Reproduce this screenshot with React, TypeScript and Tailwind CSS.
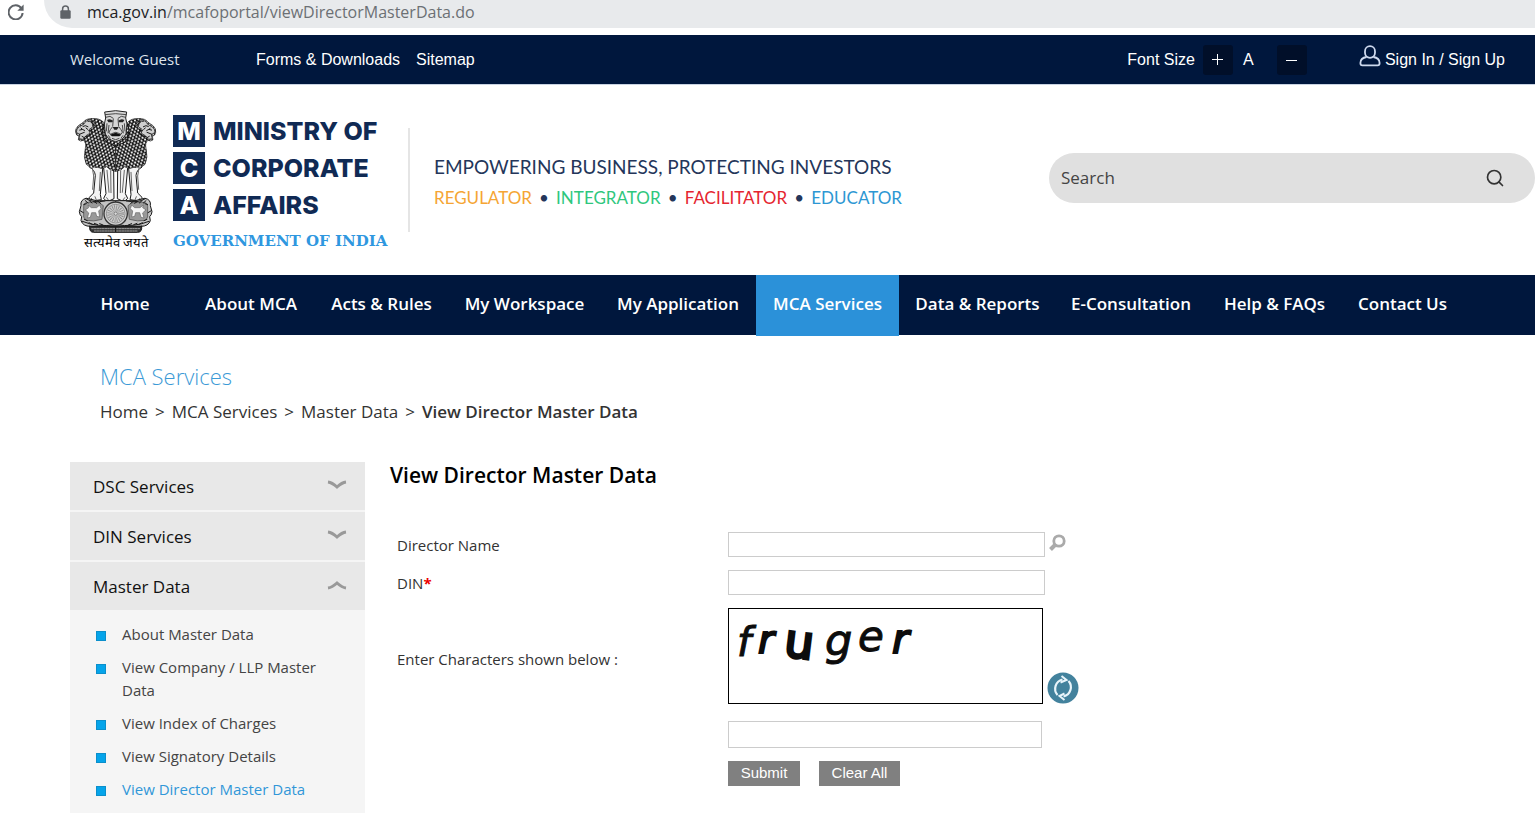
import type { ReactNode } from 'react';
import { Search } from 'lucide-react';

const navItems = [
  'Home',
  'About MCA',
  'Acts & Rules',
  'My Workspace',
  'My Application',
  'MCA Services',
  'Data & Reports',
  'E-Consultation',
  'Help & FAQs',
  'Contact Us',
];

const masterDataLinks = [
  'About Master Data',
  'View Company / LLP Master Data',
  'View Index of Charges',
  'View Signatory Details',
  'View Director Master Data',
];

function BrowserBar() {
  return (
    <div className="flex h-[35px] items-start overflow-hidden bg-white">
      <button type="button" aria-label="Reload" className="ml-2 mt-1 h-4 w-4 text-[#5f6368]">
        <svg viewBox="0 0 16 16" className="h-4 w-4" fill="none">
          <path d="M13.4 4.4A7 7 0 1 0 14.6 9" stroke="currentColor" strokeWidth="2" />
          <path d="M15.6 0.5v6.3H9.3z" fill="currentColor" />
        </svg>
      </button>
      <div className="ml-5 flex h-[28px] flex-1 items-center rounded-bl-full bg-[#e8eaec] pb-1 pl-4 text-base">
        <svg viewBox="0 0 11 14" className="h-[14px] w-[11px]" aria-hidden="true">
          <path d="M2.6 6V3.9a2.9 2.9 0 0 1 5.8 0V6" fill="none" stroke="#5f6368" strokeWidth="1.5" />
          <rect x="0.3" y="5.3" width="10.4" height="8.4" rx="1.2" fill="#5f6368" />
        </svg>
        <span className="ml-4 text-[#6c7074]">
          <span className="text-[#202124]">mca.gov.in</span>/mcafoportal/viewDirectorMasterData.do
        </span>
      </div>
    </div>
  );
}

function TopBar() {
  return (
    <div className="flex h-[50px] items-center border-b border-[#c9d3e2] bg-[#00173d] pl-[70px] pr-[30px] text-white">
      <span className="w-[186px] text-[15px] text-[#dfe4ec]">Welcome Guest</span>
      <nav className="flex gap-4 font-['Liberation_Sans',Arial,sans-serif] text-base">
        <a href="#forms">Forms &amp; Downloads</a>
        <a href="#sitemap">Sitemap</a>
      </nav>
      <div className="ml-auto flex items-center font-['Liberation_Sans',Arial,sans-serif] text-base">
        <span>Font Size</span>
        <FontButton label="Increase font size">
          <path d="M0 5.5h11M5.5 0v11" />
        </FontButton>
        <button type="button" className="w-[28px] pl-[2px] text-left">A</button>
        <FontButton label="Decrease font size">
          <path d="M0 6.5h11" />
        </FontButton>
        <a href="#sign-in" className="ml-[44px] flex items-center gap-1">
          <svg viewBox="0 0 22 22" className="mb-2 h-[22px] w-[22px]" fill="none" stroke="#cdd9ee" strokeWidth="1.8" aria-hidden="true">
            <rect x="6" y="1.2" width="10" height="11.6" rx="5" />
            <path d="M7.6 12C3.6 12.6 1.4 14.8 1.4 18c0 1.8.6 2.4 2 2.4h15.2c1.4 0 2-.6 2-2.4 0-3.2-2.2-5.4-6.2-6" />
          </svg>
          Sign In / Sign Up
        </a>
      </div>
    </div>
  );
}

function FontButton({ label, children }: { label: string; children: ReactNode }) {
  return (
    <button type="button" aria-label={label} className="mx-2 flex h-[30px] w-[30px] items-center justify-center rounded-[3px] bg-[#010f29]">
      <svg viewBox="0 0 11 11" className="h-[11px] w-[11px]" fill="none" stroke="white">{children}</svg>
    </button>
  );
}

function Emblem() {
  return (
    <svg viewBox="42 42 252 372" className="h-[124px] w-[84px]" role="img" aria-label="State Emblem of India">
      <defs>
        <pattern id="mane" width="11" height="16" patternUnits="userSpaceOnUse" patternTransform="rotate(18)">
          <rect width="11" height="16" fill="#fafafa" />
          <path d="M0 0Q1 9 5.5 11Q10 9 11 0M-5.5 8Q-4.5 17 0 19Q4.5 17 5.5 8M5.5 8Q6.5 17 11 19M-5.5 -8Q-4.5 1 0 3Q4.5 1 5.5 -8M5.5 -8Q6.5 1 11 3" fill="none" stroke="#111" strokeWidth="3.4" />
        </pattern>
        <g id="lion-side" stroke="#1a1a1a" strokeWidth="3" strokeLinejoin="round" strokeLinecap="round">
          <path d="M94 68Q78 67 70 79L55 89Q45 98 47 109L50 117L57 121L55 131Q61 138 70 133Q80 141 76 157Q69 184 79 205Q94 220 112 214L126 219L140 212L154 224L167 226V103L134 99L132 80Q119 65 94 68Z" fill="url(#mane)" strokeWidth="2" />
          <path d="M93 70Q76 73 71 85L58 92Q49 98 49 109L60 116L57 128L68 130L78 119L90 112L88 100L98 93Z" fill="#d0d0d0" stroke="#444" />
          <path d="M69 91Q76 86 84 92M59 102Q68 97 74 103M58 115L73 109M84 76Q99 72 107 83M101 87Q112 89 111 99M86 104L97 105L91 118M76 122L88 119M63 96L67 100M78 96L83 100M66 121L73 125M92 78L100 84M113 77L120 90" fill="none" />
          <path d="M89 214Q104 221 106 238L101 291L88 304Q86 314 103 314L124 311L121 296L128 219M131 216L138 293L131 307Q134 316 149 314L162 308L161 226" fill="#f4f4f4" />
          <path d="M97 216L101 240L98 280M121 229L118 284M141 223L147 289M152 224L153 290M94 307L98 312M105 302L109 312M140 305L145 312" fill="none" stroke="#666" />
          <path d="M78 307Q60 311 63 329L58 347Q59 357 65 362L63 374Q69 391 91 391H167V314H110Z" fill="#c4c4c4" />
          <path d="M74 322Q82 315 119 321L130 329L126 370Q100 378 78 373L71 363V332Z" fill="#999" stroke="#444" strokeWidth="2" />
          <path d="M77 341L86 335L84 327L94 335L110 335L119 327L123 338L116 345L119 363L110 361L107 350L95 350L91 364L82 366L86 352Z" fill="#f6f6f6" stroke="#666" strokeWidth="2" />
          <path d="M78 308Q98 322 135 315M67 376Q112 395 167 386M60 344L70 350M71 326L79 323M73 370L82 374" fill="none" />
          <path d="M89 391H167V409H101Q87 409 89 391Z" fill="#333" />
          <path d="M95 398H166M103 405H166" stroke="#ddd" strokeWidth="2" strokeDasharray="5 3" />
          <path d="M76 314L84 321M88 314L96 321M101 316L110 322M114 316L122 322M87 380L97 385M103 382L113 386M119 383L129 387" fill="none" />
        </g>
      </defs>
      <use href="#lion-side" />
      <use href="#lion-side" transform="translate(334 0) scale(-1 1)" />
      <path d="M132 84Q122 102 130 119Q134 140 149 143L167 151L185 143Q200 140 204 119Q212 102 202 84Z" fill="url(#mane)" stroke="#111" strokeWidth="3" />
      <path d="M134 48Q167 40 200 48L197 66L201 84L198 114Q190 130 179 133L167 137L155 133Q144 130 136 114L133 84L137 66Z" fill="#d6d6d6" stroke="#222" strokeWidth="3" />
      <path d="M135 56Q167 50 199 56M137 64L150 61L160 67M197 64L184 61L174 67M160 68L158 92M174 68L176 92M157 93L151 101M177 93L183 101M141 82L139 106M193 82L195 106M147 87L144 112M187 87L190 112M151 101Q143 109 151 115Q159 111 167 109Q175 111 183 115Q191 109 183 101M145 118L151 127M189 118L183 127M156 127L167 131L178 127" fill="none" stroke="#333" strokeWidth="2.6" />
      <path d="M141 72Q150 66 159 74L157 79H145ZM175 74Q184 66 193 72L189 79H177ZM158 93H176L171 101H163Z" fill="#222" />
      <path d="M150 116L167 110L184 116L178 121H156Z" fill="#111" />
      <circle cx="167" cy="353" r="35" fill="#cfcfcf" stroke="#333" strokeWidth="4" />
      <circle cx="167" cy="353" r="28" fill="none" stroke="#777" strokeWidth="2" />
      <circle cx="167" cy="353" r="16" fill="none" stroke="#888" strokeWidth="18" strokeDasharray="2 3" />
      <circle cx="167" cy="353" r="5" fill="#ddd" stroke="#555" strokeWidth="2" />
    </svg>
  );
}

function BrandLine({ letter, word }: { letter: string; word: string }) {
  return (
    <div className="flex items-center gap-2">
      <span className="flex h-8 w-8 items-center justify-center bg-[#102a54] text-white">{letter}</span>
      <span>{word}</span>
    </div>
  );
}

function Header() {
  return (
    <header className="flex h-[190px] items-center bg-white pl-[74px]">
      <a href="#home" className="flex items-center text-[#102a54]">
        <div className="flex flex-col items-center">
          <Emblem />
          <span className="text-[13px] leading-4 text-black">सत्यमेव जयते</span>
        </div>
        <div className="ml-[15px] w-[235px] pt-2">
          <div className="flex flex-col gap-[5px] whitespace-nowrap font-['Inter',sans-serif] text-[25px] font-extrabold leading-8">
            <BrandLine letter="M" word="MINISTRY OF" />
            <BrandLine letter="C" word="CORPORATE" />
            <BrandLine letter="A" word="AFFAIRS" />
          </div>
          <div className="mt-2 whitespace-nowrap font-['DejaVu_Serif',serif] text-[15px] font-bold leading-6 text-[#2f97df]">GOVERNMENT OF INDIA</div>
        </div>
      </a>
      <div className="h-[104px] w-[2px] bg-[#e5e5e5]" />
      <div className="ml-6 w-[468px] whitespace-nowrap pt-1 font-['Lato',sans-serif] leading-[31px] text-[#24365a]">
        <p className="text-[19px]">EMPOWERING BUSINESS, PROTECTING INVESTORS</p>
        <p className="flex justify-between text-[17px]">
          <span className="text-[#f5a534]">REGULATOR</span>
          <span>•</span>
          <span className="text-[#2fc77d]">INTEGRATOR</span>
          <span>•</span>
          <span className="text-[#e5252f]">FACILITATOR</span>
          <span>•</span>
          <span className="text-[#2d97d3]">EDUCATOR</span>
        </p>
      </div>
      <form className="mb-1 ml-auto flex h-[50px] w-[486px] items-center rounded-full bg-[#e0e0e0] pl-3 pr-[30px]">
        <input aria-label="Search" placeholder="Search" className="min-w-0 flex-1 bg-transparent text-[17px] outline-none placeholder:text-[#444]" />
        <button type="submit" aria-label="Search">
          <Search size={20} strokeWidth={2} color="#333" />
        </button>
      </form>
    </header>
  );
}

function MainNav() {
  return (
    <nav className="grid h-[60px] grid-cols-[126px_126px_135px_151px_156px_143px_157px_150px_137px_119px] bg-[#00173d] pl-[62px] text-[17px] font-semibold leading-[57px] text-white">
      {navItems.map((item) => (
        <a
          key={item}
          href="#nav"
          className={item === 'MCA Services' ? 'h-[61px] whitespace-nowrap bg-[#2b91d9] text-center' : 'whitespace-nowrap text-center'}
        >
          {item}
        </a>
      ))}
    </nav>
  );
}

function Chevron({ open = false }: { open?: boolean }) {
  return (
    <svg viewBox="0 0 20 10" className="mb-1 h-[10px] w-5" fill="none" stroke="#999" strokeWidth="3" aria-hidden="true">
      <path d={open ? 'M1 8Q5 7.5 10 3Q15 7.5 19 8' : 'M1 2Q5 2.5 10 7Q15 2.5 19 2'} />
    </svg>
  );
}

function SideHeading({ label, open }: { label: string; open?: boolean }) {
  return (
    <button type="button" aria-expanded={!!open} className="flex h-[48px] w-full items-center justify-between bg-[#e8e8e8] pl-[23px] pr-[18px] pt-px text-[17px] text-[#111]">
      {label}
      <Chevron open={open} />
    </button>
  );
}

function Sidebar() {
  return (
    <aside className="w-[295px] shrink-0 bg-[#f5f5f5]">
      <div className="flex flex-col gap-[2px]">
        <SideHeading label="DSC Services" />
        <SideHeading label="DIN Services" />
        <SideHeading label="Master Data" open />
      </div>
      <ul className="flex flex-col gap-[10px] pl-[26px] pr-8 pt-[13px] text-[15px] leading-[23px] text-[#444]">
        {masterDataLinks.map((link) => (
          <li key={link} className="flex gap-4">
            <span className="mt-[8px] h-[10px] w-[10px] shrink-0 border border-[#0b8fcb] bg-[#05a4ea]" />
            <a href="#master-data" className={link === 'View Director Master Data' ? 'text-[#3197d8]' : ''}>{link}</a>
          </li>
        ))}
      </ul>
    </aside>
  );
}

function Captcha() {
  return (
    <svg viewBox="0 0 313 94" className="h-[96px] w-[315px] border border-black bg-white" role="img" aria-label="Captcha">
      <g fontFamily="DejaVu Sans, sans-serif" fontStyle="italic" fill="#0c0c0c" stroke="#0c0c0c">
        <text x="8" y="47" fontSize="40">f</text>
        <text x="29" y="44" fontSize="39" strokeWidth="2">r</text>
        <text x="54" y="47" fontSize="46" fontStyle="normal" rotate="7" strokeWidth="3">u</text>
        <text x="96" y="46" fontSize="43">g</text>
        <text x="129" y="42" fontSize="42">e</text>
        <text x="163" y="44" fontSize="41" strokeWidth="2">r</text>
      </g>
    </svg>
  );
}

function DirectorForm() {
  const input = 'block border border-[#ccc] bg-white px-2 outline-none';
  return (
    <form className="mt-[44px] grid grid-cols-[331px_1fr] items-center gap-y-[13px] pl-[7px] text-[15px] text-[#333]">
      <label htmlFor="director-name" className="pt-[2px]">Director Name</label>
      <div className="flex gap-1">
        <input id="director-name" className={`${input} h-[25px] w-[317px]`} />
        <button type="button" aria-label="Find director" className="mt-[2px] h-[17px] w-[17px]">
          <svg viewBox="0 0 17 17" className="h-[17px] w-[17px]" fill="none" stroke="#aaa">
            <circle cx="10" cy="7" r="5.2" strokeWidth="2.8" />
            <path d="M6 11L1.5 15.5" strokeWidth="4" />
          </svg>
        </button>
      </div>
      <label htmlFor="din" className="pt-[2px]">DIN<span className="font-bold text-[#e00]">*</span></label>
      <input id="din" className={`${input} h-[25px] w-[317px]`} />
      <label htmlFor="captcha" className="pt-[6px]">Enter Characters shown below :</label>
      <div className="flex items-end gap-1">
        <Captcha />
        <button type="button" aria-label="Refresh captcha">
          <svg viewBox="0 0 32 32" className="h-8 w-8" fill="none">
            <circle cx="16" cy="16" r="15.5" fill="#43829d" />
            <path d="M10.5 23A9.500 9.500 0 0 1 15.500 7.500M21.500 9A9.500 9.500 0 0 1 16.500 24.500" stroke="#e8f4fa" strokeWidth="2.2" />
            <path d="M14.5 4L19.5 8L13.5 10.5M17.5 21.5L12.5 24L17.5 28" stroke="#e8f4fa" strokeWidth="2" />
          </svg>
        </button>
      </div>
      <input id="captcha" className={`${input} col-start-2 mt-1 h-[27px] w-[314px]`} />
      <div className="col-start-2 flex gap-[19px] font-['Liberation_Sans',Arial,sans-serif] text-white">
        <button type="submit" className="h-[25px] w-[72px] bg-[#808080]">Submit</button>
        <button type="reset" className="h-[25px] w-[81px] bg-[#808080]">Clear All</button>
      </div>
    </form>
  );
}

export default function App() {
  return (
    <div className="flex min-h-screen flex-col overflow-x-hidden bg-white font-['Open_Sans',sans-serif]">
      <BrowserBar />
      <TopBar />
      <Header />
      <MainNav />
      <div className="pl-[100px] pt-[26px]">
        <h2 className="text-[22px] font-light leading-[30px] text-[#3b9ad6]">MCA Services</h2>
        <div className="mt-[9px] flex gap-[7px] text-[17px] leading-6 text-[#333]">
          <a href="#home">Home</a>
          <span>&gt;</span>
          <a href="#services">MCA Services</a>
          <span>&gt;</span>
          <a href="#master">Master Data</a>
          <span>&gt;</span>
          <span className="font-semibold">View Director Master Data</span>
        </div>
      </div>
      <main className="flex flex-1 pl-[70px] pt-[38px]">
        <Sidebar />
        <section className="flex-1 pl-[25px]">
          <h1 className="text-[21px] font-semibold leading-[26px] text-black">View Director Master Data</h1>
          <DirectorForm />
        </section>
      </main>
    </div>
  );
}
